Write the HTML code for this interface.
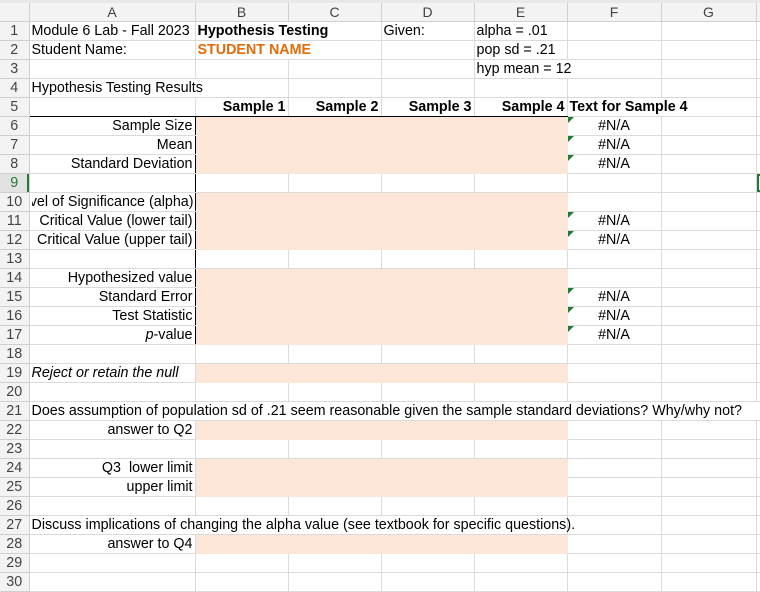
<!DOCTYPE html>
<html><head><style>
body{margin:0;background:#fff;width:760px;height:588px;overflow:hidden;font-family:"Liberation Sans",Arial,sans-serif;font-size:14.3px;color:#000}
table{border-collapse:collapse;table-layout:fixed;position:absolute;left:0;top:3px;width:760px}
td{height:18px;padding:0 2px;border-right:1px solid #dadada;border-bottom:1px solid #dadada;white-space:nowrap;overflow:visible;line-height:18px}
tr.h td{height:18px;background:#f3f3f3;color:#444;text-align:center;font-size:14px;border-color:#cfcfcf}
td.n{background:#f3f3f3;color:#444;text-align:center;padding:0;border-color:#cfcfcf}
td.f{background:#fce6d8;border-color:#fce6d8}
td.r{text-align:right}
td.b{font-weight:bold}
td.c{text-align:center}
.tri{position:relative}
.tri:before{content:"";position:absolute;left:0;top:0;border-top:6px solid #1e7b34;border-right:6px solid transparent}
.ov{overflow:hidden}
.fx{display:flex;justify-content:flex-end;overflow:hidden;width:162px}
.fx span{flex:none}
</style></head><body>
<div style="position:absolute;left:0;top:0;width:760px;height:3px;background:#e8e8e8"></div>
<table>
<colgroup><col style="width:29px"><col style="width:166px"><col style="width:93px"><col style="width:93px"><col style="width:93px"><col style="width:93px"><col style="width:94px"><col style="width:95px"><col style="width:4px"></colgroup>
<tr class="h"><td></td><td>A</td><td>B</td><td>C</td><td>D</td><td>E</td><td>F</td><td>G</td><td></td></tr>
<tr><td class="n">1</td><td>Module 6 Lab - Fall 2023</td><td class="b" colspan="2" style="border-right:1px solid #dadada">Hypothesis Testing</td><td>Given:</td><td>alpha = .01</td><td></td><td></td><td></td></tr>
<tr><td class="n">2</td><td>Student Name:</td><td class="b" style="color:#e26b0a" colspan="2">STUDENT NAME</td><td></td><td>pop sd = .21</td><td></td><td></td><td></td></tr>
<tr><td class="n">3</td><td></td><td></td><td></td><td></td><td colspan="2">hyp mean = 12</td><td></td><td></td></tr>
<tr><td class="n">4</td><td colspan="2">Hypothesis Testing Results</td><td></td><td></td><td></td><td></td><td></td><td></td></tr>
<tr><td class="n">5</td><td style="border-bottom:1px solid #000"></td><td class="b r" style="border-bottom:1px solid #000">Sample 1</td><td class="b r" style="border-bottom:1px solid #000">Sample 2</td><td class="b r" style="border-bottom:1px solid #000">Sample 3</td><td class="b r" style="border-bottom:1px solid #000">Sample 4</td><td class="b" colspan="2">Text for Sample 4</td><td></td></tr>
<tr><td class="n">6</td><td class="r" style="border-right:1px solid #000">Sample Size</td><td class="f"></td><td class="f"></td><td class="f"></td><td class="f"></td><td class="c tri">#N/A</td><td></td><td></td></tr>
<tr><td class="n">7</td><td class="r" style="border-right:1px solid #000">Mean</td><td class="f"></td><td class="f"></td><td class="f"></td><td class="f"></td><td class="c tri">#N/A</td><td></td><td></td></tr>
<tr><td class="n">8</td><td class="r" style="border-right:1px solid #000">Standard Deviation</td><td class="f"></td><td class="f"></td><td class="f"></td><td class="f"></td><td class="c tri">#N/A</td><td></td><td></td></tr>
<tr><td class="n" style="color:#1e7b34;background:#e2e2e2;box-shadow:inset -2px 0 0 #1e7b34">9</td><td style="border-right:1px solid #000"></td><td></td><td></td><td></td><td></td><td></td><td></td><td style="box-shadow:inset 2px 0 0 #1e7b34,inset 0 2px 0 #1e7b34,inset 0 -2px 0 #1e7b34"></td></tr>
<tr><td class="n">10</td><td style="border-right:1px solid #000"><div class="fx"><span>Level of Significance (alpha)</span></div></td><td class="f"></td><td class="f"></td><td class="f"></td><td class="f"></td><td></td><td></td><td></td></tr>
<tr><td class="n">11</td><td class="r" style="border-right:1px solid #000">Critical Value (lower tail)</td><td class="f"></td><td class="f"></td><td class="f"></td><td class="f"></td><td class="c tri">#N/A</td><td></td><td></td></tr>
<tr><td class="n">12</td><td class="r" style="border-right:1px solid #000">Critical Value (upper tail)</td><td class="f"></td><td class="f"></td><td class="f"></td><td class="f"></td><td class="c tri">#N/A</td><td></td><td></td></tr>
<tr><td class="n">13</td><td style="border-right:1px solid #000"></td><td></td><td></td><td></td><td></td><td></td><td></td><td></td></tr>
<tr><td class="n">14</td><td class="r" style="border-right:1px solid #000">Hypothesized value</td><td class="f"></td><td class="f"></td><td class="f"></td><td class="f"></td><td></td><td></td><td></td></tr>
<tr><td class="n">15</td><td class="r" style="border-right:1px solid #000">Standard Error</td><td class="f"></td><td class="f"></td><td class="f"></td><td class="f"></td><td class="c tri">#N/A</td><td></td><td></td></tr>
<tr><td class="n">16</td><td class="r" style="border-right:1px solid #000">Test Statistic</td><td class="f"></td><td class="f"></td><td class="f"></td><td class="f"></td><td class="c tri">#N/A</td><td></td><td></td></tr>
<tr><td class="n">17</td><td class="r" style="border-right:1px solid #000"><i>p</i>-value</td><td class="f"></td><td class="f"></td><td class="f"></td><td class="f"></td><td class="c tri">#N/A</td><td></td><td></td></tr>
<tr><td class="n">18</td><td></td><td></td><td></td><td></td><td></td><td></td><td></td><td></td></tr>
<tr><td class="n">19</td><td><i>Reject or retain the null</i></td><td class="f"></td><td class="f"></td><td class="f"></td><td class="f"></td><td></td><td></td><td></td></tr>
<tr><td class="n">20</td><td></td><td></td><td></td><td></td><td></td><td></td><td></td><td></td></tr>
<tr><td class="n">21</td><td colspan="8" style="overflow:hidden">Does assumption of population sd of .21 seem reasonable given the sample standard deviations? Why/why not?</td></tr>
<tr><td class="n">22</td><td class="r">answer to Q2</td><td class="f"></td><td class="f"></td><td class="f"></td><td class="f"></td><td></td><td></td><td></td></tr>
<tr><td class="n">23</td><td></td><td></td><td></td><td></td><td></td><td></td><td></td><td></td></tr>
<tr><td class="n">24</td><td class="r">Q3&nbsp; lower limit</td><td class="f"></td><td class="f"></td><td class="f"></td><td class="f"></td><td></td><td></td><td></td></tr>
<tr><td class="n">25</td><td class="r">upper limit</td><td class="f"></td><td class="f"></td><td class="f"></td><td class="f"></td><td></td><td></td><td></td></tr>
<tr><td class="n">26</td><td></td><td></td><td></td><td></td><td></td><td></td><td></td><td></td></tr>
<tr><td class="n">27</td><td colspan="5">Discuss implications of changing the alpha value (see textbook for specific questions).</td><td></td><td></td><td></td></tr>
<tr><td class="n">28</td><td class="r">answer to Q4</td><td class="f"></td><td class="f"></td><td class="f"></td><td class="f"></td><td></td><td></td><td></td></tr>
<tr><td class="n">29</td><td></td><td></td><td></td><td></td><td></td><td></td><td></td><td></td></tr>
<tr><td class="n">30</td><td></td><td></td><td></td><td></td><td></td><td></td><td></td><td></td></tr>
</table>
</body></html>
